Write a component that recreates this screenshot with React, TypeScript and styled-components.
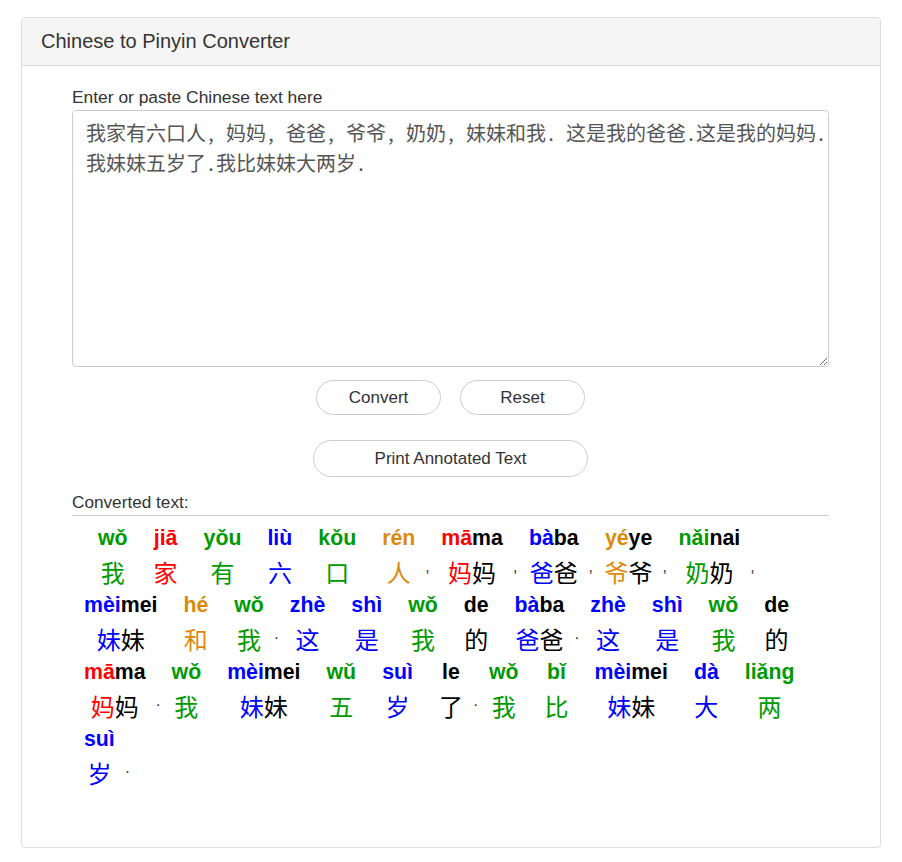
import React from 'react';
import styled, { createGlobalStyle } from 'styled-components';

type Tone = 0 | 1 | 2 | 3 | 4;

interface Token {
  py: [string, Tone][];
  hz: [string, Tone][];
  punct?: ',' | '·';
}

const toneColors: Record<Tone, string> = {
  0: '#000000',
  1: '#ff0000',
  2: '#dc8a0c',
  3: '#009a00',
  4: '#0000ff',
};

const GlobalStyle = createGlobalStyle`
  body {
    margin: 0;
    background: #ffffff;
    color: #333333;
    font-family: "Liberation Sans", Arial, sans-serif;
  }
`;

const Page = styled.div`
  padding: 17px 21px 14px;
`;

const Panel = styled.section`
  border: 1px solid #dddddd;
  border-radius: 4px;
  background: #ffffff;
`;

const PanelHeading = styled.header`
  background: #f5f5f5;
  border-bottom: 1px solid #dddddd;
  border-radius: 3px 3px 0 0;
  padding: 11px 19px 12px;
  font-size: 20px;
  line-height: 24px;
  color: #333333;
`;

const PanelBody = styled.div`
  padding: 20px 51px 56px 50px;
`;

const FieldLabel = styled.label`
  display: block;
  font-size: 17.4px;
  line-height: 22px;
  margin-bottom: 2px;
`;

const SourceBox = styled.textarea`
  display: block;
  width: 100%;
  height: 257px;
  box-sizing: border-box;
  margin: 0;
  border: 1px solid #cccccc;
  border-radius: 4px;
  padding: 7px 0 7px 13px;
  font-family: "Noto Sans CJK SC", sans-serif;
  font-feature-settings: "hwid";
  font-size: 20px;
  line-height: 30px;
  color: #555555;
  background: #ffffff;
  outline: none;
`;

const ButtonRow = styled.div<{ $top: number }>`
  display: flex;
  justify-content: center;
  gap: 19px;
  margin-top: ${p => p.$top}px;
`;

const PillButton = styled.button<{ $width: number; $height: number }>`
  width: ${p => p.$width}px;
  height: ${p => p.$height}px;
  border: 1px solid #cccccc;
  border-radius: 20px;
  background: #ffffff;
  color: #333333;
  font-family: "Liberation Sans", Arial, sans-serif;
  font-size: 17px;
  padding: 0;
  cursor: pointer;
`;

const ResultLabel = styled.div`
  margin-top: 14px;
  padding-bottom: 2px;
  border-bottom: 1px solid #cccccc;
  font-size: 17.2px;
  line-height: 22px;
`;

const Annotated = styled.div`
  display: flex;
  flex-wrap: wrap;
  align-items: flex-start;
  column-gap: 26px;
  row-gap: 2px;
  padding: 9px 0 0 12px;
`;

const Word = styled.div<{ $indent?: number }>`
  position: relative;
  display: flex;
  flex-direction: column;
  align-items: center;
  margin-left: ${p => p.$indent ?? 0}px;
`;

const Pinyin = styled.div`
  font-weight: bold;
  font-size: 21.3px;
  line-height: 26px;
  white-space: nowrap;
`;

const Hanzi = styled.div`
  margin-top: 3px;
  font-family: "Noto Sans CJK SC", sans-serif;
  font-size: 24px;
  line-height: 36px;
  white-space: nowrap;
`;

const Toned = styled.span<{ $tone: Tone }>`
  color: ${p => toneColors[p.$tone]};
`;

const Punct = styled.span<{ $dot: boolean }>`
  position: absolute;
  left: calc(100% + 10px);
  top: ${p => (p.$dot ? 38 : 34)}px;
  font-size: 16px;
  line-height: 16px;
  color: #333333;
`;

const tokens: Token[] = [
  { py: [['wǒ', 3]], hz: [['我', 3]] },
  { py: [['jiā', 1]], hz: [['家', 1]] },
  { py: [['yǒu', 3]], hz: [['有', 3]] },
  { py: [['liù', 4]], hz: [['六', 4]] },
  { py: [['kǒu', 3]], hz: [['口', 3]] },
  { py: [['rén', 2]], hz: [['人', 2]], punct: ',' },
  { py: [['mā', 1], ['ma', 0]], hz: [['妈', 1], ['妈', 0]], punct: ',' },
  { py: [['bà', 4], ['ba', 0]], hz: [['爸', 4], ['爸', 0]], punct: ',' },
  { py: [['yé', 2], ['ye', 0]], hz: [['爷', 2], ['爷', 0]], punct: ',' },
  { py: [['nǎi', 3], ['nai', 0]], hz: [['奶', 3], ['奶', 0]], punct: ',' },
  { py: [['mèi', 4], ['mei', 0]], hz: [['妹', 4], ['妹', 0]] },
  { py: [['hé', 2]], hz: [['和', 2]] },
  { py: [['wǒ', 3]], hz: [['我', 3]], punct: '·' },
  { py: [['zhè', 4]], hz: [['这', 4]] },
  { py: [['shì', 4]], hz: [['是', 4]] },
  { py: [['wǒ', 3]], hz: [['我', 3]] },
  { py: [['de', 0]], hz: [['的', 0]] },
  { py: [['bà', 4], ['ba', 0]], hz: [['爸', 4], ['爸', 0]], punct: '·' },
  { py: [['zhè', 4]], hz: [['这', 4]] },
  { py: [['shì', 4]], hz: [['是', 4]] },
  { py: [['wǒ', 3]], hz: [['我', 3]] },
  { py: [['de', 0]], hz: [['的', 0]] },
  { py: [['mā', 1], ['ma', 0]], hz: [['妈', 1], ['妈', 0]], punct: '·' },
  { py: [['wǒ', 3]], hz: [['我', 3]] },
  { py: [['mèi', 4], ['mei', 0]], hz: [['妹', 4], ['妹', 0]] },
  { py: [['wǔ', 3]], hz: [['五', 3]] },
  { py: [['suì', 4]], hz: [['岁', 4]] },
  { py: [['le', 0]], hz: [['了', 0]], punct: '·' },
  { py: [['wǒ', 3]], hz: [['我', 3]] },
  { py: [['bǐ', 3]], hz: [['比', 3]] },
  { py: [['mèi', 4], ['mei', 0]], hz: [['妹', 4], ['妹', 0]] },
  { py: [['dà', 4]], hz: [['大', 4]] },
  { py: [['liǎng', 3]], hz: [['两', 3]] },
  { py: [['suì', 4]], hz: [['岁', 4]], punct: '·' },
];

const sourceText =
  '我家有六口人, 妈妈, 爸爸, 爷爷, 奶奶, 妹妹和我. 这是我的爸爸.这是我的妈妈.\n我妹妹五岁了.我比妹妹大两岁.';

const App: React.FC = () => {
  return (
    <>
      <GlobalStyle />
      <Page>
        <Panel>
          <PanelHeading>Chinese to Pinyin Converter</PanelHeading>
          <PanelBody>
            <FieldLabel htmlFor="source">Enter or paste Chinese text here</FieldLabel>
            <SourceBox id="source" defaultValue={sourceText} />
            <ButtonRow $top={13}>
              <PillButton $width={125} $height={35}>Convert</PillButton>
              <PillButton $width={125} $height={35}>Reset</PillButton>
            </ButtonRow>
            <ButtonRow $top={25}>
              <PillButton $width={275} $height={37}>Print Annotated Text</PillButton>
            </ButtonRow>
            <ResultLabel>Converted text:</ResultLabel>
            <Annotated>
              {tokens.map((t, i) => (
                <Word key={i} $indent={i === 0 ? 14 : 0}>
                  <Pinyin>
                    {t.py.map(([s, tone], j) => (
                      <Toned key={j} $tone={tone}>{s}</Toned>
                    ))}
                  </Pinyin>
                  <Hanzi>
                    {t.hz.map(([c, tone], j) => (
                      <Toned key={j} $tone={tone}>{c}</Toned>
                    ))}
                  </Hanzi>
                  {t.punct && <Punct $dot={t.punct === '·'}>{t.punct}</Punct>}
                </Word>
              ))}
            </Annotated>
          </PanelBody>
        </Panel>
      </Page>
    </>
  );
};

export default App;
